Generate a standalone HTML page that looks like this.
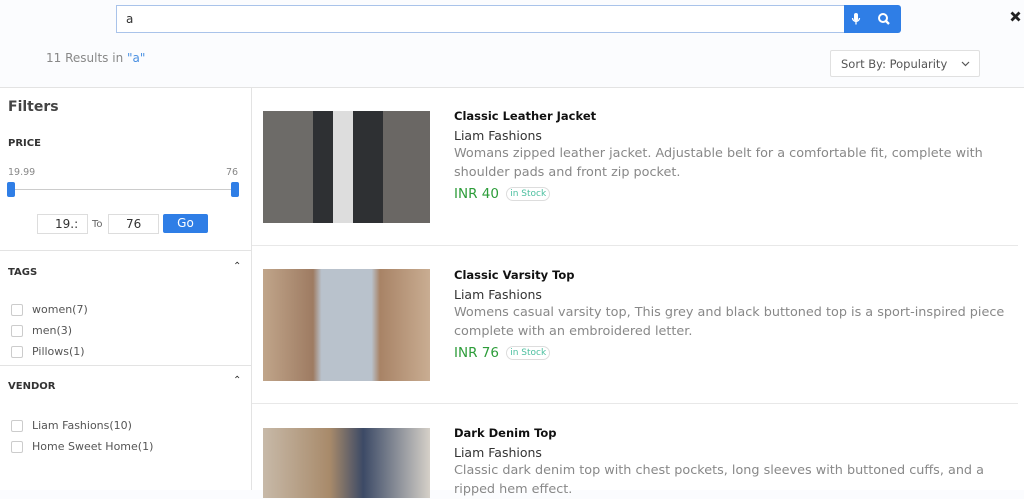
<!DOCTYPE html><html><head><style>
*{box-sizing:border-box;margin:0;padding:0}
body{width:1024px;height:490px;overflow:hidden;background:#fbfcfe;font-family:"DejaVu Sans","Liberation Sans",sans-serif;position:relative;color:#333}
.abs{position:absolute}
.search{left:116px;top:5px;width:729px;height:28px;border:1px solid #a9c3ea;background:#fff;font-size:12px;padding:6px 9px}
.btns{left:844px;top:5px;width:57px;height:28px;background:#2f7ee6;border-radius:0 3px 3px 0}
.side{left:0;top:87px;width:252px;height:403px;background:#fff;border-right:1px solid #e3e3e3;border-top:1px solid #e3e3e3}
.main{left:252px;top:87px;width:772px;height:403px;background:#fff;border-top:1px solid #e3e3e3}
.h{font-weight:bold;font-size:10px;color:#333}
.cb{width:12px;height:12px;border:1px solid #ccc;border-radius:2px;display:inline-block;vertical-align:middle;margin-right:9px}
.it{font-size:11px;color:#555;margin-bottom:8px}
.t{font-weight:bold;font-size:11.5px;color:#111}
.v{font-size:12.5px;color:#333}
.d{font-size:12.8px;color:#888;line-height:19px}
.p{font-size:13.5px;color:#2d9d3a;margin-top:4px}
.st{display:inline-block;font-size:9px;color:#4bbf9f;border:1px solid #ddd;border-radius:8px;padding:1px 3px;vertical-align:middle;margin-left:3px}
</style></head><body>
<div class="abs search">a</div>
<div class="abs btns"><svg width="57" height="28"><rect x="10" y="8" width="4" height="8" rx="2" fill="#fff"/><path d="M8.5 13a3.5 3.5 0 0 0 7 0M12 16.5v3" stroke="#fff" stroke-width="1.3" fill="none"/><circle cx="39" cy="13" r="4" stroke="#fff" stroke-width="2" fill="none"/><path d="M42 16l3 3" stroke="#fff" stroke-width="2.3"/></svg></div>
<svg class="abs" style="left:1010px;top:11px" width="11" height="11"><path d="M1.5 1.5l8 8M9.5 1.5l-8 8" stroke="#222" stroke-width="2.8"/></svg>
<div class="abs" style="left:46px;top:51px;font-size:12px;color:#888">11 Results in <span style="color:#4a90e2">"a"</span></div>
<div class="abs" style="left:830px;top:50px;width:150px;height:27px;border:1px solid #e0e0e0;background:#fff;border-radius:2px;font-size:11.5px;color:#555;padding:6px 10px">Sort By: Popularity <svg style="position:absolute;right:9px;top:10px" width="9" height="6"><path d="M1 1l3.5 3.5L8 1" stroke="#555" fill="none" stroke-width="1.2"/></svg></div>
<div class="abs side">
<div class="abs" style="left:8px;top:11px;font-size:14px;font-weight:bold;color:#444">Filters</div>
<div class="abs h" style="left:8px;top:50px">PRICE</div>
<div class="abs" style="left:8px;top:79px;font-size:9.5px;color:#888">19.99</div>
<div class="abs" style="left:226px;top:79px;font-size:9.5px;color:#888">76</div>
<div class="abs" style="left:11px;top:101px;width:224px;height:1px;background:#ccc"></div>
<div class="abs" style="left:7px;top:94px;width:8px;height:15px;background:#2f7ee6;border-radius:2px"></div>
<div class="abs" style="left:231px;top:94px;width:8px;height:15px;background:#2f7ee6;border-radius:2px"></div>
<div class="abs" style="left:37px;top:126px;width:51px;height:20px;border:1px solid #ddd;font-size:12px;padding:2px 0 0 17px;overflow:hidden">19.:</div>
<div class="abs" style="left:92px;top:131px;font-size:10px;color:#666">To</div>
<div class="abs" style="left:108px;top:126px;width:51px;height:20px;border:1px solid #ddd;font-size:12px;padding:2px 0 0 17px">76</div>
<div class="abs" style="left:163px;top:126px;width:45px;height:19px;background:#2f7ee6;color:#fff;font-size:12px;text-align:center;padding-top:2px;border-radius:2px">Go</div>
<div class="abs" style="left:0;top:162px;width:251px;height:1px;background:#e3e3e3"></div>
<div class="abs h" style="left:8px;top:179px">TAGS</div><div class="abs" style="left:233px;top:173px;font-size:10px">⌃</div>
<div class="abs" style="left:11px;top:215px"><div class="it"><span class="cb"></span>women(7)</div><div class="it"><span class="cb"></span>men(3)</div><div class="it"><span class="cb"></span>Pillows(1)</div></div>
<div class="abs" style="left:0;top:277px;width:251px;height:1px;background:#e3e3e3"></div>
<div class="abs h" style="left:8px;top:293px">VENDOR</div><div class="abs" style="left:233px;top:287px;font-size:10px">⌃</div>
<div class="abs" style="left:11px;top:331px"><div class="it"><span class="cb"></span>Liam Fashions(10)</div><div class="it"><span class="cb"></span>Home Sweet Home(1)</div></div>
</div>
<div class="abs main">
<div class="abs" style="left:11px;top:23px;width:167px;height:112px;background:linear-gradient(90deg,#6d6b68 0 30%,#2e3033 30% 72%,#6a6764 72%)"><div style="position:absolute;left:70px;top:0;width:20px;height:112px;background:#ddd"></div></div>
<div class="abs" style="left:202px;top:21px"><div class="t">Classic Leather Jacket</div><div class="v" style="margin-top:5px">Liam Fashions</div><div class="d" style="margin-top:1px">Womans zipped leather jacket. Adjustable belt for a comfortable fit, complete with<br>shoulder pads and front zip pocket.</div><div class="p">INR 40 <span class="st">in Stock</span></div></div>
<div class="abs" style="left:0;top:157px;width:766px;height:1px;background:#e8e8e8"></div>
<div class="abs" style="left:11px;top:181px;width:167px;height:112px;background:linear-gradient(90deg,#c0a58a,#9e7b62 30%,#b9c2cc 35% 65%,#a88366 70%,#c9ad92)"></div>
<div class="abs" style="left:202px;top:180px"><div class="t">Classic Varsity Top</div><div class="v" style="margin-top:5px">Liam Fashions</div><div class="d" style="margin-top:1px">Womens casual varsity top, This grey and black buttoned top is a sport-inspired piece<br>complete with an embroidered letter.</div><div class="p">INR 76 <span class="st">in Stock</span></div></div>
<div class="abs" style="left:0;top:315px;width:766px;height:1px;background:#e8e8e8"></div>
<div class="abs" style="left:11px;top:340px;width:167px;height:70px;background:linear-gradient(90deg,#c7b9a8,#a88a6a 40%,#3c4a66 60%,#d5d0c8)"></div>
<div class="abs" style="left:202px;top:338px"><div class="t">Dark Denim Top</div><div class="v" style="margin-top:5px">Liam Fashions</div><div class="d" style="margin-top:1px">Classic dark denim top with chest pockets, long sleeves with buttoned cuffs, and a<br>ripped hem effect.</div></div>
</div>
</body></html>
